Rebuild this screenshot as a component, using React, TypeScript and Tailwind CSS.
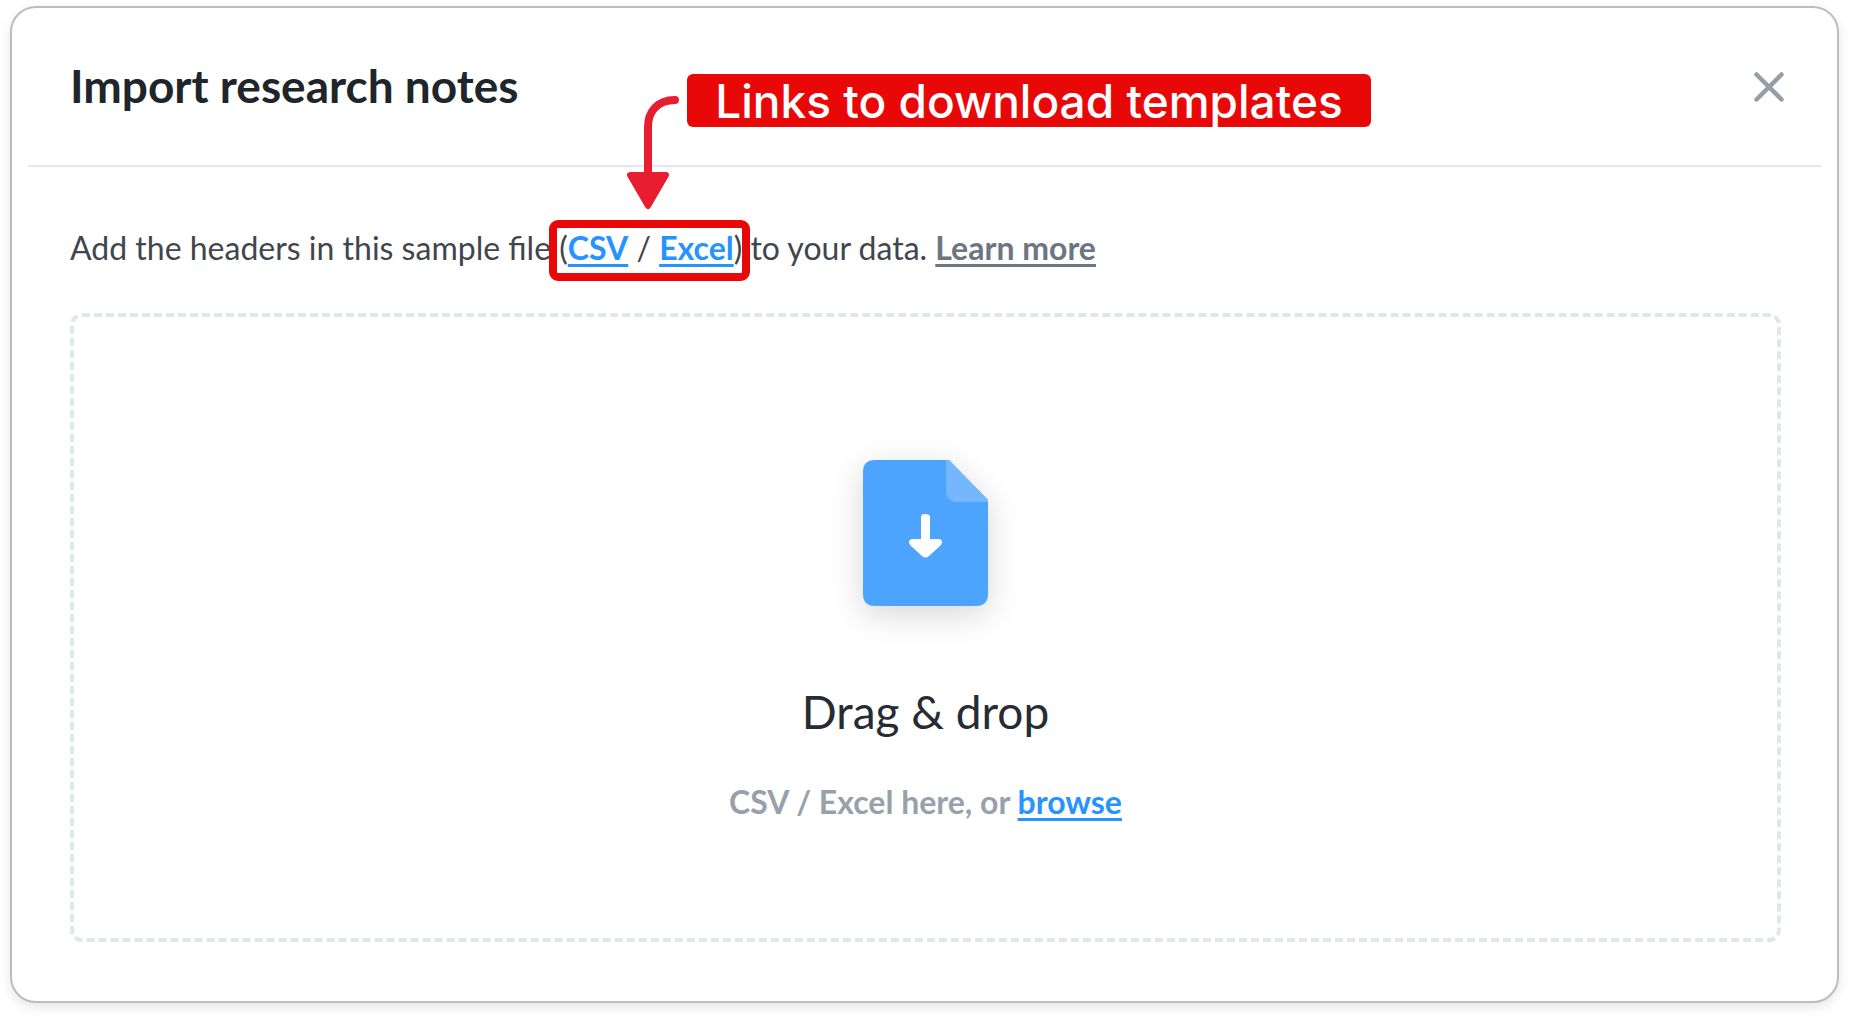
function CloseIcon() {
    return (
        <svg width="34" height="34" viewBox="0 0 34 34" fill="none" stroke="#949eaa" strokeWidth="4.500" strokeLinecap="round" aria-hidden="true">
            <path d="M4.500 4.500L29.500 29.500M29.500 4.500L4.500 29.500" />
        </svg>
    );
}

function FileIcon() {
    return (
        <svg
            className="drop-shadow-[0_8px_16px_rgba(0,0,0,0.16)]"
            width="125"
            height="146"
            viewBox="0 0 125 146"
            aria-hidden="true"
        >
            <path d="M12 0H86L125 40V134Q125 146 113 146H12Q0 146 0 134V12Q0 0 12 0Z" fill="#4ca4ff" />
            <path d="M83 0H86L125 40V42H95Q83 42 83 30Z" fill="#74b7ff" />
            <path
                d="M58 57Q58 54 62 54Q67 54 67 57V79H75Q79 79 79 82Q79 84 77 86L66 96Q62.500 99 59 96L48 86Q46 84 46 82Q46 79 50 79H58Z"
                fill="#fff"
            />
        </svg>
    );
}

function Callout() {
    return (
        <>
            <span className="pointer-events-none absolute -top-1 -right-2 -bottom-[9px] -left-2.5 rounded-[9px] border-8 border-[#e90808]"></span>
            <svg
                className="pointer-events-none absolute bottom-full left-[68px] mb-2"
                width="54"
                height="120"
                viewBox="0 0 54 120"
                aria-hidden="true"
            >
                <path d="M48 4C31 4 21 15 21 31V84" fill="none" stroke="#e81d2f" strokeWidth="8" strokeLinecap="round" />
                <path d="M3 79H39L21 110Z" fill="#e81d2f" stroke="#e81d2f" strokeWidth="6" strokeLinejoin="round" />
            </svg>
            <span className="absolute bottom-full left-32 mb-[97px] flex h-[53px] items-center rounded-md bg-[#e90808] px-7 font-['Inter',sans-serif] text-[46px] font-medium whitespace-nowrap text-white">
                Links to download templates
            </span>
        </>
    );
}

function App() {
    return (
        <main className="min-h-screen bg-white pt-1.5 pr-[11px] pb-3.5 pl-2.5 font-['Lato','Open_Sans',sans-serif]">
            <section className="rounded-[26px] border-2 border-[#bdbdbd] bg-white px-4 shadow-[0_4px_12px_rgba(0,0,0,0.1)]">
                <header className="flex items-center justify-between border-b-2 border-[#e3e8ec] pt-[49px] pr-[35px] pb-12 pl-[42px]">
                    <h1 className="pb-0.5 text-[46px] leading-[58px] font-bold text-[#20252b]">Import research notes</h1>
                    <button type="button" aria-label="Close">
                        <CloseIcon />
                    </button>
                </header>

                <div className="pt-[57px] pr-10 pb-[59px] pl-[42px]">
                    <p className="text-[32px] leading-[48px] text-[#3f464d]">
                        Add the headers in this sample file{' '}
                        <span className="relative inline-block">
                            (
                            <a href="#csv" className="font-bold text-[#2693ff] underline decoration-[3px] underline-offset-4">CSV</a>
                            {' / '}
                            <a href="#excel" className="font-bold text-[#2693ff] underline decoration-[3px] underline-offset-4">Excel</a>
                            )
                            <Callout />
                        </span>{' '}
                        to your data.{' '}
                        <a href="#learn-more" className="font-bold text-[#6c7681] underline decoration-[3px] underline-offset-4">Learn more</a>
                    </p>

                    <div className="mt-[41px] flex flex-col items-center rounded-xl border-4 border-dashed border-[#e0e6ea] pt-[143px] pb-28">
                        <FileIcon />
                        <h2 className="mt-[76px] text-[46px] leading-[60px] text-[#272c32]">Drag &amp; drop</h2>
                        <p className="mt-9 text-[32px] leading-[48px] font-bold text-[#97a1ab]">
                            CSV / Excel here, or{' '}
                            <button type="button" className="text-[#2693ff] underline decoration-[3px] underline-offset-4">browse</button>
                        </p>
                    </div>
                </div>
            </section>
        </main>
    );
}

export default App;
